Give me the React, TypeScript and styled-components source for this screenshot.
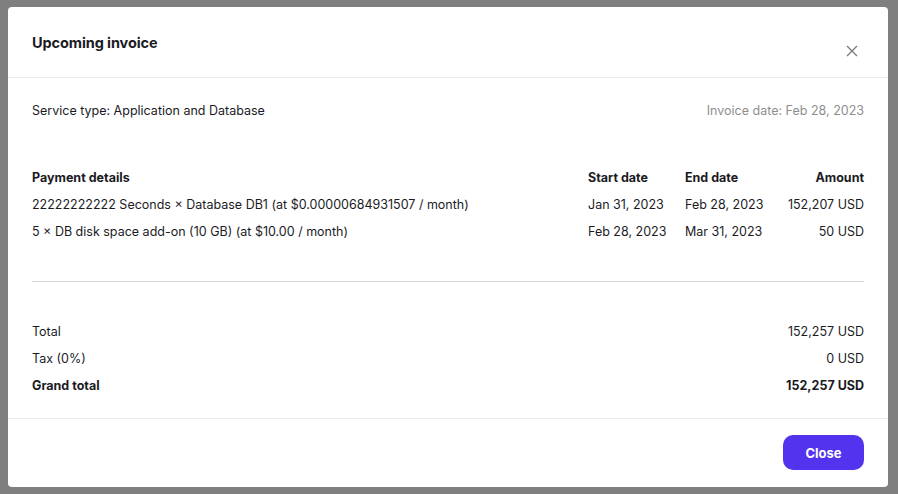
import styled, { createGlobalStyle } from 'styled-components';

const GlobalStyle = createGlobalStyle`
  html, body {
    margin: 0;
    padding: 0;
    background: #7f7f7f;
  }
  body {
    font-family: Inter, "Liberation Sans", sans-serif;
    color: #1b1b1f;
  }
  * { box-sizing: border-box; }
`;

const lineItems = [
  {
    title: '22222222222 Seconds × Database DB1 (at $0.00000684931507 / month)',
    start: 'Jan 31, 2023',
    end: 'Feb 28, 2023',
    amount: '152,207 USD',
  },
  {
    title: '5 × DB disk space add-on (10 GB) (at $10.00 / month)',
    start: 'Feb 28, 2023',
    end: 'Mar 31, 2023',
    amount: '50 USD',
  },
];

const totals = [
  { label: 'Total', value: '152,257 USD', strong: false },
  { label: 'Tax (0%)', value: '0 USD', strong: false },
  { label: 'Grand total', value: '152,257 USD', strong: true },
];

export default function App(): JSX.Element {
  return (
    <>
      <GlobalStyle />
      <Overlay>
        <Modal>
          <Header>
            <Title>Upcoming invoice</Title>
            <CloseIcon aria-label='Close'>
              <svg width='12' height='12' viewBox='0 0 12 12'>
                <path d='M1 1 L11 11 M11 1 L1 11' stroke='#7a7a7a' strokeWidth='1.3' />
              </svg>
            </CloseIcon>
          </Header>
          <Body>
            <MetaRow>
              <span>Service type: Application and Database</span>
              <Muted>Invoice date: Feb 28, 2023</Muted>
            </MetaRow>
            <Table>
              <HeadCell>Payment details</HeadCell>
              <HeadCell>Start date</HeadCell>
              <HeadCell>End date</HeadCell>
              <HeadCell $right>Amount</HeadCell>
              {lineItems.map((item) => (
                <>
                  <Cell key={item.title}>{item.title}</Cell>
                  <Cell>{item.start}</Cell>
                  <Cell>{item.end}</Cell>
                  <Cell $right>{item.amount}</Cell>
                </>
              ))}
            </Table>
            <Divider />
            <Totals>
              {totals.map(({ label, value, strong }) => (
                <TotalRow key={label} $strong={strong}>
                  <span>{label}</span>
                  <span>{value}</span>
                </TotalRow>
              ))}
            </Totals>
          </Body>
          <Footer>
            <PrimaryButton>Close</PrimaryButton>
          </Footer>
        </Modal>
      </Overlay>
    </>
  );
}

const Overlay = styled.div`
  width: 898px;
  height: 494px;
  padding: 7px 10px 7px 8px;
  display: flex;
`;

const Modal = styled.div`
  flex: 1;
  background: #fff;
  border-radius: 4px;
  display: flex;
  flex-direction: column;
  overflow: hidden;
`;

const Header = styled.div`
  height: 71px;
  flex-shrink: 0;
  display: flex;
  justify-content: space-between;
  align-items: flex-start;
  padding: 25px 24px 0;
  border-bottom: 1px solid #ececec;
`;

const Title = styled.h2`
  margin: 0;
  font-size: 14.5px;
  line-height: 22px;
  font-weight: 700;
  letter-spacing: -0.1px;
`;

const CloseIcon = styled.button`
  border: none;
  background: none;
  padding: 0;
  margin-top: 13px;
  margin-right: 6px;
  width: 12px;
  height: 12px;
  display: flex;
  cursor: pointer;
`;

const Body = styled.div`
  flex: 1;
  padding: 23px 24px 0;
  font-size: 12.5px;
  line-height: 20px;
`;

const MetaRow = styled.div`
  display: flex;
  justify-content: space-between;
`;

const Muted = styled.span`
  color: #8e8e8e;
`;

const Table = styled.div`
  margin-top: 47px;
  display: grid;
  grid-template-columns: 1fr 97px 102px 77px;
  row-gap: 7px;
`;

const HeadCell = styled.div<{ $right?: boolean }>`
  font-weight: 700;
  text-align: ${(p) => (p.$right ? 'right' : 'left')};
  white-space: nowrap;
`;

const Cell = styled.div<{ $right?: boolean }>`
  text-align: ${(p) => (p.$right ? 'right' : 'left')};
  white-space: nowrap;
`;

const Divider = styled.hr`
  margin: 39px 0 0;
  border: none;
  border-top: 1px solid #d8d8d8;
`;

const Totals = styled.div`
  margin-top: 40px;
  display: flex;
  flex-direction: column;
  gap: 7px;
`;

const TotalRow = styled.div<{ $strong: boolean }>`
  display: flex;
  justify-content: space-between;
  font-weight: ${(p) => (p.$strong ? 700 : 400)};
`;

const Footer = styled.div`
  flex-shrink: 0;
  display: flex;
  justify-content: flex-end;
  padding: 16px 24px 17px;
  border-top: 1px solid #ececec;
`;

const PrimaryButton = styled.button`
  width: 81px;
  height: 35px;
  border: none;
  border-radius: 10px;
  background: #5333ed;
  color: #fff;
  font-family: inherit;
  font-size: 13px;
  font-weight: 700;
  cursor: pointer;
`;
